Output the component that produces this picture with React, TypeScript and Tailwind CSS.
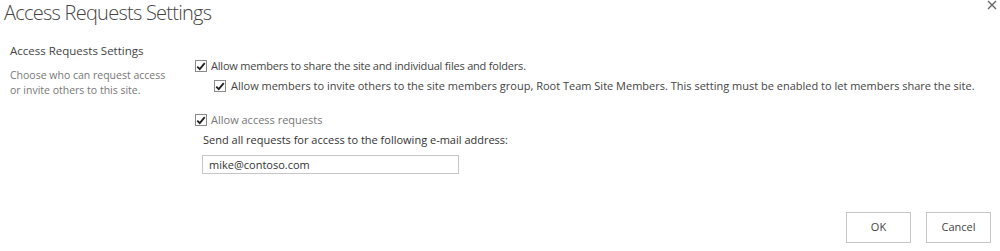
function Check({ className = "" }: { className?: string }) {
  return (
    <span className={`inline-flex h-[12px] w-[12px] shrink-0 items-center justify-center border border-[#8a8a8a] bg-white ${className}`}>
      <svg viewBox="0 0 12 12" className="h-[11px] w-[11px]">
        <path d="M1.5 6.2 L4.5 9.2 L10.5 2" fill="none" stroke="#222" strokeWidth="2.2" />
      </svg>
    </span>
  )
}

export default function App() {
  return (
    <div
      className="relative h-[251px] w-[1000px] overflow-hidden bg-white text-[#444]"
      style={{ fontFamily: '"Segoe UI", "Open Sans", "Noto Sans", sans-serif' }}
    >
      <div className="flex items-start justify-between">
        <h1 className="pl-[4px] text-[20px] font-light leading-[26px] tracking-[-0.75px] text-[#444]">
          Access Requests Settings
        </h1>
        <button className="mr-[3px] mt-[0px] text-[#666]" aria-label="Close">
          <svg viewBox="0 0 10 10" className="h-[10px] w-[10px]">
            <path d="M1 1 L9 9 M9 1 L1 9" stroke="currentColor" strokeWidth="1.4" />
          </svg>
        </button>
      </div>

      <div className="mt-[17px] flex">
        <div className="w-[195px] pl-[10px]">
          <div className="text-[11.5px] leading-[16px] text-[#444]">Access Requests Settings</div>
          <p className="mt-[9px] w-[160px] text-[10.5px] leading-[15px] text-[#777]">
            Choose who can request access or invite others to this site.
          </p>
        </div>

        <div className="flex flex-col pt-[13px] text-[11px] leading-[20px]">
          <label className="flex items-center gap-[4px]">
            <Check />
            <span className="tracking-[-0.2px]">Allow members to share the site and individual files and folders.</span>
          </label>
          <label className="ml-[19px] flex items-center gap-[5px]">
            <Check />
            <span>
              Allow members to invite others to the site members group, Root Team Site Members. This setting must be
              enabled to let members share the site.
            </span>
          </label>

          <label className="mt-[14px] flex items-center gap-[4px] text-[#777]">
            <Check />
            <span>Allow access requests</span>
          </label>
          <div className="ml-[8px] text-[#333]">Send all requests for access to the following e-mail address:</div>
          <input
            readOnly
            value="mike@contoso.com"
            className="ml-[7px] mt-[5px] h-[19px] w-[257px] border border-[#c6c6c6] px-[6px] text-[11px] text-[#333] outline-none"
          />
        </div>
      </div>

      <div className="absolute bottom-[8px] right-[9px] flex gap-[15px]">
        <button className="h-[31px] w-[65px] border border-[#c6c6c6] bg-white text-[11px] text-[#444]">OK</button>
        <button className="h-[31px] w-[65px] border border-[#c6c6c6] bg-white text-[11px] text-[#444]">Cancel</button>
      </div>
    </div>
  )
}
